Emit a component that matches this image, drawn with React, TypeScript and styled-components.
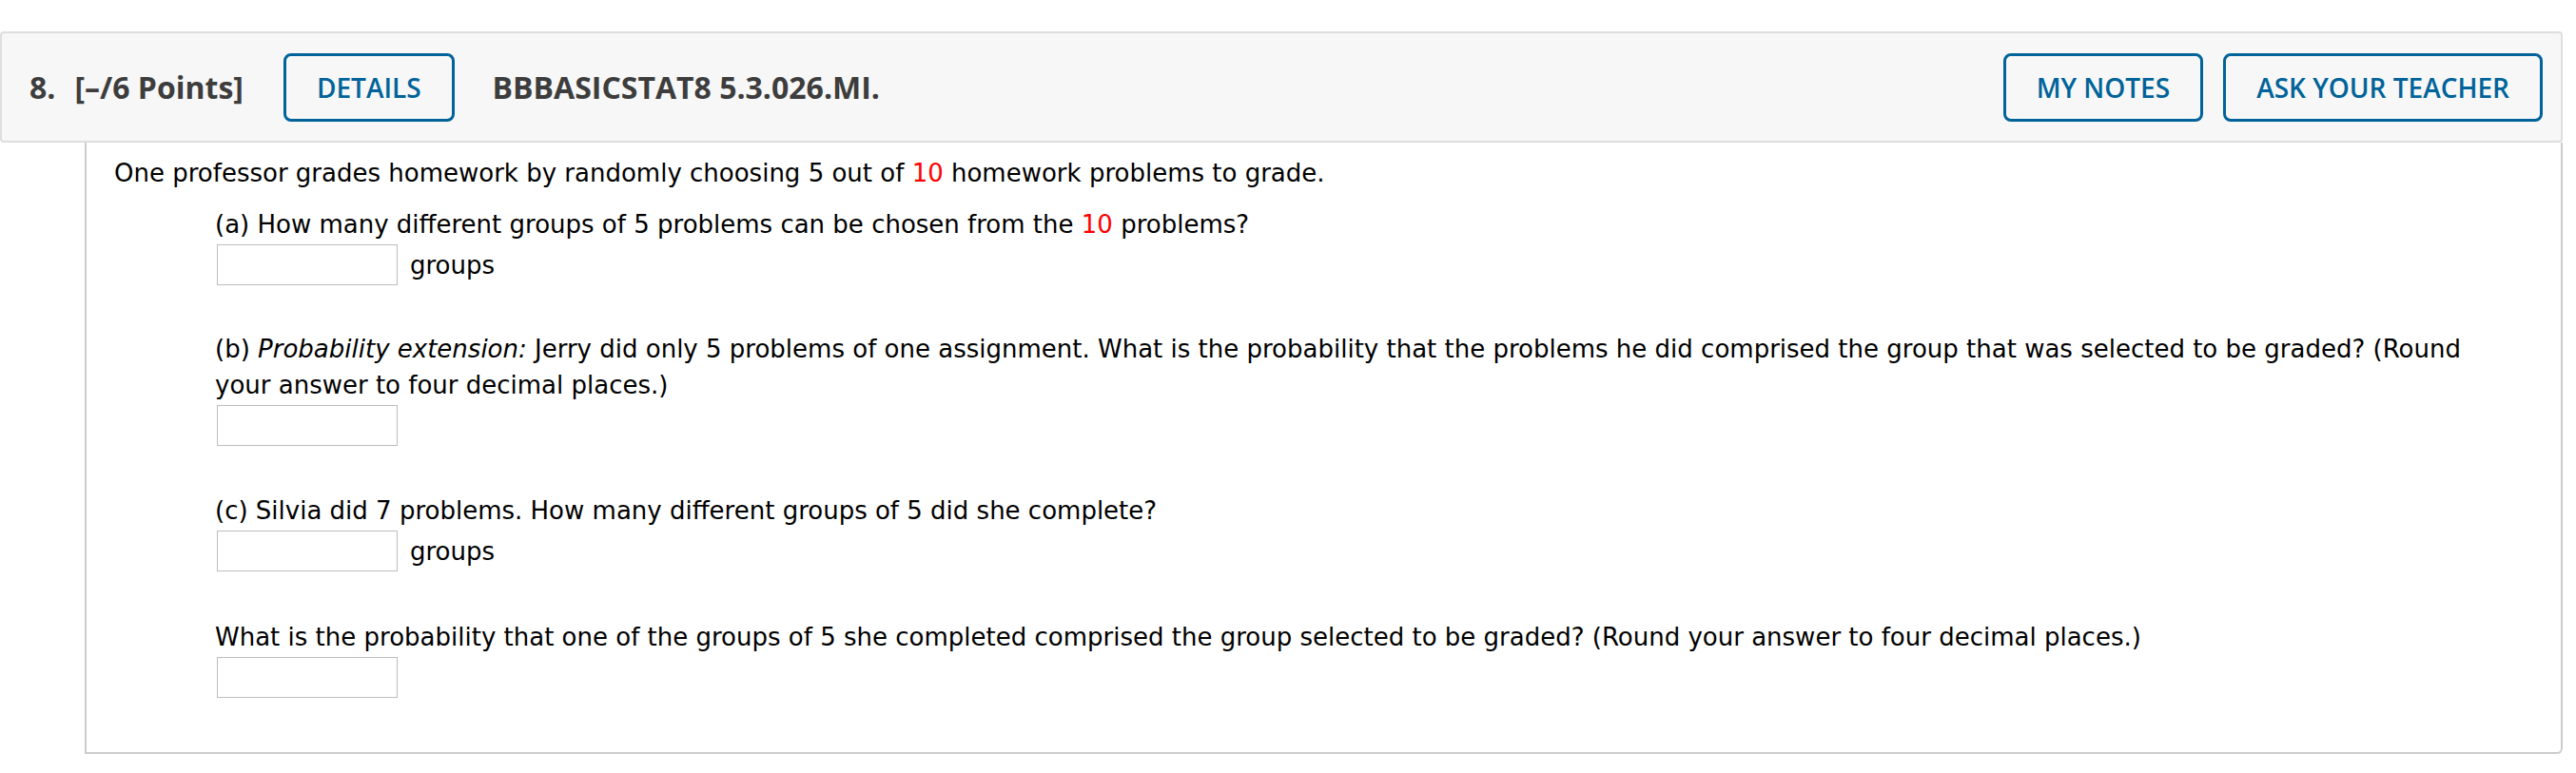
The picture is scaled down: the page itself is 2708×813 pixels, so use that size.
import React from "react";
import styled, { createGlobalStyle } from "styled-components";

const Global = createGlobalStyle`
  html, body { margin: 0; padding: 0; background: #ffffff; }
  body { font-family: "DejaVu Sans", Verdana, sans-serif; }
`;

const Page = styled.div`
  padding: 33px 14px 0 0;
`;

const Header = styled.div`
  display: flex;
  align-items: center;
  box-sizing: border-box;
  height: 117px;
  padding: 0 19px 0 29px;
  background: #f7f7f7;
  border: 2px solid #dedede;
  border-radius: 4px;
  font-family: "Open Sans", sans-serif;
  color: #3d3d3d;
`;

const Num = styled.span`
  font-size: 32px;
  font-weight: 700;
  margin-right: 20px;
`;

const Points = styled.span`
  font-size: 32px;
  font-weight: 700;
`;

const Title = styled.span`
  font-size: 32px;
  font-weight: 700;
  margin-left: 40px;
`;

const Spacer = styled.div`
  flex: 1;
`;

const Btn = styled.button<{ $ml?: number }>`
  box-sizing: border-box;
  height: 72px;
  padding: 0 32px;
  margin-left: ${(p) => p.$ml ?? 0}px;
  background: transparent;
  border: 3px solid #00639a;
  border-radius: 8px;
  color: #00639a;
  font-family: "Open Sans", sans-serif;
  font-size: 28px;
  font-weight: 600;
  cursor: pointer;
`;

const Content = styled.div`
  margin-left: 89px;
  box-sizing: border-box;
  height: 643px;
  padding: 13px 55px 0 29px;
  border: 2px solid #cccccc;
  border-top: none;
  border-bottom-right-radius: 6px;
  font-size: 26px;
  line-height: 38px;
  color: #000000;
`;

const Intro = styled.p`
  margin: 0 0 16px 0;
`;

const Part = styled.div<{ $mt?: number }>`
  margin: ${(p) => p.$mt ?? 0}px 0 0 106px;
`;

const Question = styled.div``;

const Red = styled.span`
  color: #ff0000;
`;

const AnswerRow = styled.div`
  display: flex;
  align-items: center;
  gap: 13px;
  margin-top: 2px;
`;

const Input = styled.input`
  box-sizing: border-box;
  width: 190px;
  height: 43px;
  margin: 0 0 0 2px;
  padding: 0 6px;
  border: 1px solid #bdbdbd;
  background: #ffffff;
  font-family: "DejaVu Sans", sans-serif;
  font-size: 26px;
  outline: none;
`;

const Unit = styled.span``;

export default function App() {
  return (
    <>
      <Global />
      <Page>
        <Header>
          <Num>8.</Num>
          <Points>[–/6 Points]</Points>
          <Btn $ml={42}>DETAILS</Btn>
          <Title>BBBASICSTAT8 5.3.026.MI.</Title>
          <Spacer />
          <Btn>MY NOTES</Btn>
          <Btn $ml={21}>ASK YOUR TEACHER</Btn>
        </Header>
        <Content>
          <Intro>
            One professor grades homework by randomly choosing 5 out of <Red>10</Red> homework
            problems to grade.
          </Intro>
          <Part>
            <Question>
              (a) How many different groups of 5 problems can be chosen from the <Red>10</Red>{" "}
              problems?
            </Question>
            <AnswerRow>
              <Input type="text" />
              <Unit>groups</Unit>
            </AnswerRow>
          </Part>
          <Part $mt={48}>
            <Question>
              (b) <em>Probability extension:</em> Jerry did only 5 problems of one assignment.
              What is the probability that the problems he did comprised the group that was
              selected to be graded? (Round your answer to four decimal places.)
            </Question>
            <AnswerRow>
              <Input type="text" />
            </AnswerRow>
          </Part>
          <Part $mt={49}>
            <Question>(c) Silvia did 7 problems. How many different groups of 5 did she complete?</Question>
            <AnswerRow>
              <Input type="text" />
              <Unit>groups</Unit>
            </AnswerRow>
          </Part>
          <Part $mt={50}>
            <Question>
              What is the probability that one of the groups of 5 she completed comprised the
              group selected to be graded? (Round your answer to four decimal places.)
            </Question>
            <AnswerRow>
              <Input type="text" />
            </AnswerRow>
          </Part>
        </Content>
      </Page>
    </>
  );
}
